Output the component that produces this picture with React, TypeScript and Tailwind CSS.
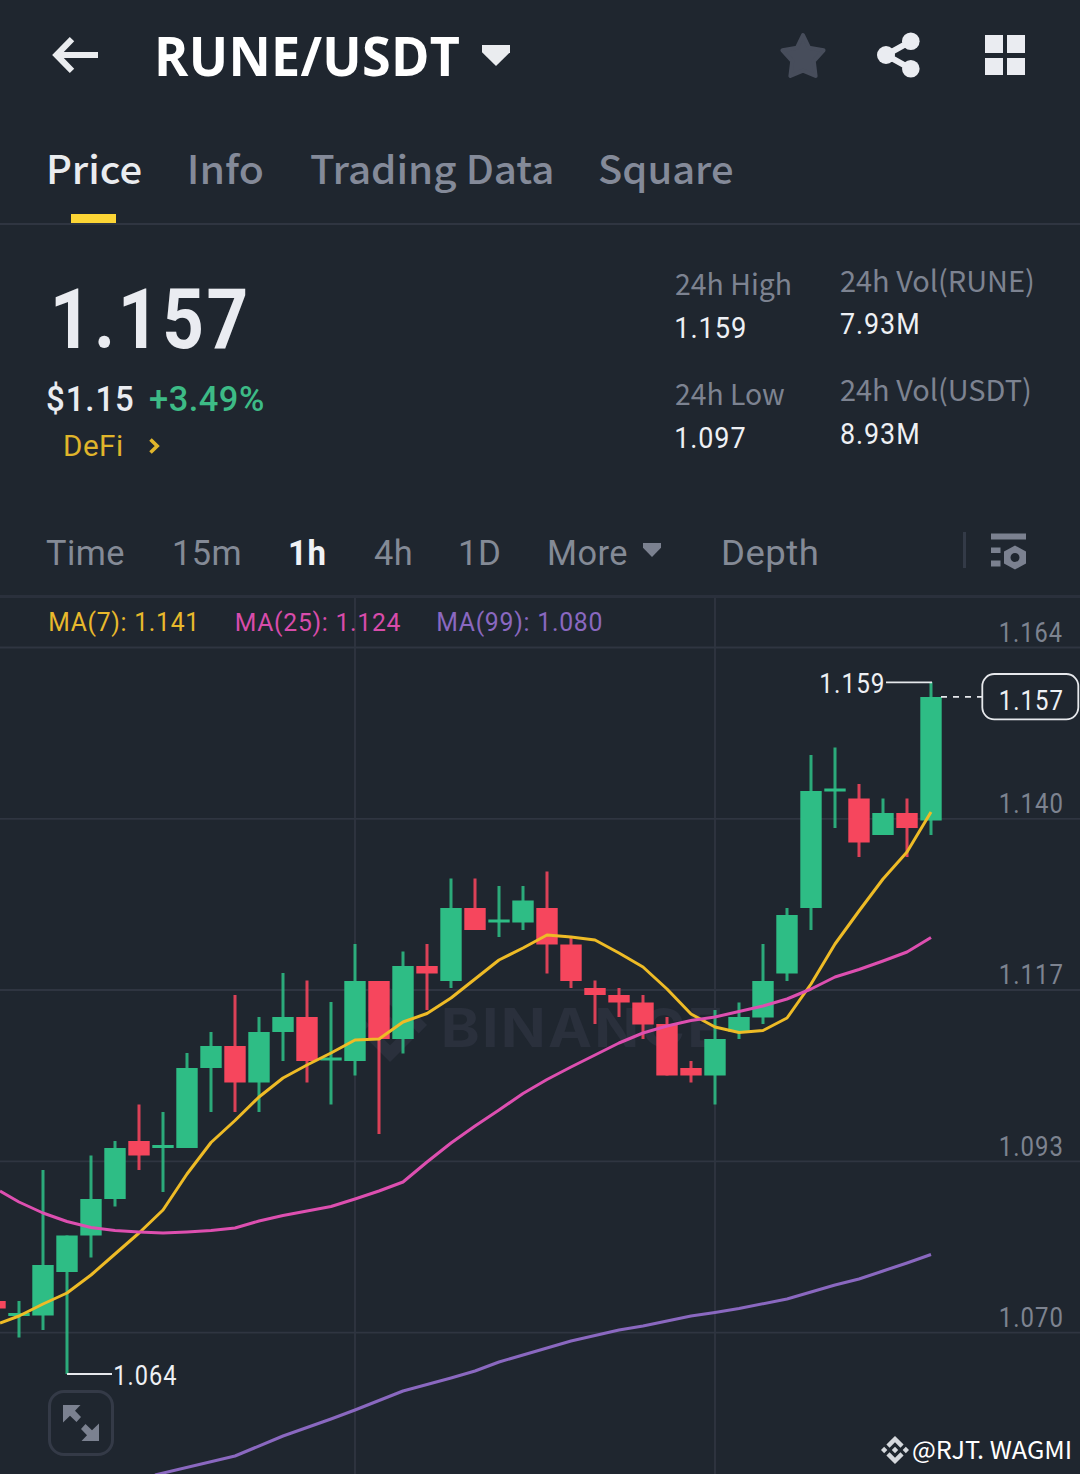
import { useLayoutEffect, useRef, useState } from "react";
import type { ReactNode } from "react";

const SANS = "font-['Noto_Sans_CJK_SC','Open_Sans',sans-serif]";
const DIN = "font-['Roboto','Inter',sans-serif]";

/* Measures the inked extent of a text so it can be set to an exact width. */
function measureInk(el: Element, text: string) {
  const cs = getComputedStyle(el);
  const ctx = document.createElement("canvas").getContext("2d")!;
  ctx.font = `${cs.fontWeight} ${cs.fontSize} ${cs.fontFamily}`;
  (ctx as unknown as { letterSpacing: string }).letterSpacing =
    cs.letterSpacing === "normal" ? "0px" : cs.letterSpacing;
  const m = ctx.measureText(text);
  return { left: m.actualBoundingBoxLeft, width: m.actualBoundingBoxLeft + m.actualBoundingBoxRight };
}

function Fit({ text, w, className }: { text: string; w: number; className: string }) {
  const ref = useRef<HTMLSpanElement>(null);
  const [t, setT] = useState("none");
  useLayoutEffect(() => {
    const ink = measureInk(ref.current!, text);
    const s = w / ink.width;
    setT(`translateX(${ink.left * s}px) scaleX(${s})`);
  }, [text, w]);
  return (
    <span className={`block shrink-0 whitespace-nowrap ${className}`} style={{ width: w }}>
      <span ref={ref} className="inline-block origin-left" style={{ transform: t }}>
        {text}
      </span>
    </span>
  );
}

function ChartText({ text, x, y, w, className }: { text: string; x: number; y: number; w: number; className: string }) {
  const ref = useRef<SVGTextElement>(null);
  const [t, setT] = useState(`translate(${x} ${y})`);
  useLayoutEffect(() => {
    const ink = measureInk(ref.current!, text);
    const s = w / ink.width;
    setT(`translate(${x + ink.left * s} ${y}) scale(${s} 1)`);
  }, [text, x, y, w]);
  return (
    <text ref={ref} transform={t} className={className}>
      {text}
    </text>
  );
}

function Caret({ className }: { className: string }) {
  return (
    <svg viewBox="0 0 28 22" preserveAspectRatio="none" className={className} fill="currentColor">
      <path d="M0 0H28V7.5L14 22L0 7.5Z" />
    </svg>
  );
}

function BinanceMark() {
  return (
    <>
      <path d="M38.7 53.2 63.3 28.6 87.9 53.2 102.2 38.9 63.3 0 24.4 38.9Z" />
      <path d="M0 63.3 14.3 49 28.6 63.3 14.3 77.6Z" />
      <path d="M38.7 73.4 63.3 98 87.9 73.4 102.2 87.7 63.3 126.6 24.4 87.7Z" />
      <path d="M98 63.3 112.3 49 126.6 63.3 112.3 77.6Z" />
      <path d="M77.8 63.3 63.3 48.8 48.8 63.3 63.3 77.8Z" />
    </>
  );
}

function Header() {
  return (
    <header className="flex h-[110px] items-center pl-[52px] pr-[55px]">
      <svg viewBox="0 0 46 36" className="h-[36px] w-[46px] shrink-0" fill="none" stroke="#eaecef" strokeWidth="6.2">
        <path d="M46 18H5M20 2.2L4.5 18L20 33.8" />
      </svg>
      <div className="ml-[60px] flex items-center pt-[2px]">
        <Fit
          text="RUNE/USDT"
          w={301}
          className="font-['Open_Sans',sans-serif] text-[53.5px] leading-[60px] font-bold tracking-[0.3px] text-white"
        />
      </div>
      <Caret className="ml-[23px] h-[21px] w-[28px] text-[#eaecef]" />
      <svg viewBox="0 0 46 47" className="ml-auto h-[47px] w-[46px]" fill="#474d5b" stroke="#474d5b" strokeWidth="4" strokeLinejoin="round">
        <path d="M23 3L29 15.7L43.5 18.3L33.8 29.2L35.6 44L23 38.6L10.4 44L12.2 29.2L2.5 18.3L17 15.7Z" />
      </svg>
      <svg viewBox="0 0 43 46" className="ml-[51px] h-[46px] w-[43px]" fill="#eaecf1" stroke="#eaecf1">
        <path d="M34 9.2L9 23L34 36.8" fill="none" strokeWidth="6" />
        <circle cx="33.8" cy="9.2" r="8.8" stroke="none" />
        <circle cx="9" cy="23" r="9" stroke="none" />
        <circle cx="33.8" cy="36.8" r="8.8" stroke="none" />
      </svg>
      <div className="ml-[65px] grid h-[40px] w-[40px] grid-cols-2 gap-x-[4px] gap-y-[5px]">
        <span className="bg-[#eaecf1]" />
        <span className="bg-[#eaecf1]" />
        <span className="bg-[#eaecf1]" />
        <span className="bg-[#eaecf1]" />
      </div>
    </header>
  );
}

function Tabs() {
  const tabs = [
    { label: "Price", w: 92, pad: "pl-0", active: true },
    { label: "Info", w: 73, pad: "pl-[2px]", active: false },
    { label: "Trading Data", w: 241, pad: "pl-0", active: false },
    { label: "Square", w: 133.5, pad: "pl-0", active: false },
  ];
  return (
    <nav className="flex h-[115px] gap-[47.4px] border-b-2 border-[#2f3541] pt-[37px] pl-[49px]">
      {tabs.map((t) => (
        <div key={t.label} className={`flex flex-col ${t.pad}`}>
          <Fit
            text={t.label}
            w={t.w}
            className={`${SANS} text-[39px] leading-[40px] font-medium ${t.active ? "text-[#eaecef]" : "text-[#848a99]"}`}
          />
          {t.active && <span className="mt-[27px] ml-[22px] h-[9px] w-[45px] bg-[#fcd535]" />}
        </div>
      ))}
    </nav>
  );
}

function Stat({ label, lw, value, vw, className }: { label: string; lw: number; value: string; vw: number; className: string }) {
  return (
    <div className={`flex flex-col justify-between ${className}`}>
      <Fit text={label} w={lw} className={`${SANS} text-[29px] leading-[36px] text-[#7d8391]`} />
      <Fit text={value} w={vw} className={`${DIN} text-[29.5px] leading-[36px] tracking-[1px] text-[#eef0f4]`} />
    </div>
  );
}

function Summary() {
  return (
    <section className="flex h-[285px] justify-between pr-[47px] pl-[47px]">
      <div className="flex flex-col pt-[53px]">
        <div className="pl-[8px]">
          <Fit text="1.157" w={191} className={`${DIN} text-[83px] leading-[84px] font-bold tracking-[3px] text-[#eaecf1]`} />
        </div>
        <div className="mt-[18px] flex gap-[17px]">
          <Fit text="$1.15" w={86} className={`${DIN} text-[35px] leading-[40px] font-medium tracking-[1px] text-[#eaecf1]`} />
          <Fit text="+3.49%" w={113.5} className={`${DIN} text-[35px] leading-[40px] font-medium tracking-[0.5px] text-[#3dbb86]`} />
        </div>
        <div className="mt-[8px] flex items-center pl-[18px]">
          <Fit text="DeFi" w={57} className={`${DIN} text-[29.5px] leading-[36px] tracking-[0.5px] text-[#e0b52b]`} />
          <svg viewBox="0 0 11 16" className="mb-[1px] ml-[27px] h-[16px] w-[11px]" fill="none" stroke="#e0b52b" strokeWidth="3.6">
            <path d="M1.5 1.5L8.2 8L1.5 14.5" />
          </svg>
        </div>
      </div>
      <div className="flex gap-[49.5px]">
        <div className="flex w-[116px] flex-col gap-[28px] pt-[39px]">
          <Stat label="24h High" lw={114.5} value="1.159" vw={69} className="h-[82px] pl-[0.5px]" />
          <Stat label="24h Low" lw={108.5} value="1.097" vw={69} className="h-[82px] pl-[0.5px]" />
        </div>
        <div className="flex w-[192px] flex-col gap-[28px] pt-[36px]">
          <Stat label="24h Vol(RUNE)" lw={192} value="7.93M" vw={77} className="h-[81px]" />
          <Stat label="24h Vol(USDT)" lw={189} value="8.93M" vw={77} className="h-[82px]" />
        </div>
      </div>
    </section>
  );
}

function Intervals() {
  const items = [
    { label: "Time", w: 78 },
    { label: "15m", w: 66 },
    { label: "1h", w: 34.5, active: true },
    { label: "4h", w: 36.5 },
    { label: "1D", w: 39 },
    { label: "More", w: 78 },
  ];
  return (
    <div className="flex h-[88px] items-center border-b-[3px] border-[#2a303c] pr-[54px] pl-[46px]">
      <div className="flex gap-[49.8px] pt-[2px]">
        {items.map((i) => (
          <Fit
            key={i.label}
            text={i.label}
            w={i.w}
            className={`${DIN} text-[35px] leading-[42px] tracking-[0.5px] ${i.active ? "font-bold text-[#f0f2f6]" : "text-[#848a96]"}`}
          />
        ))}
      </div>
      <Caret className="mb-[5px] ml-[16px] h-[14px] w-[18px] text-[#7b8190]" />
      <div className="ml-[62px] pt-[2px]">
        <Fit text="Depth" w={93.5} className={`${DIN} text-[35px] leading-[42px] tracking-[0.5px] text-[#848a96]`} />
      </div>
      <span className="mb-[5px] ml-auto h-[36px] w-[3px] bg-[#333a47]" />
      <svg viewBox="0 0 35 37" className="mb-[3px] ml-[25px] h-[37px] w-[35px]" fill="#7b8190">
        <path d="M0 0.5H35V6.5H0ZM0 14.5H9.5V20H0ZM0 27.5H9.5V33.5H0Z" />
        <path fillRule="evenodd" d="M24 12.5L35 18.5V30.5L24 36.5L13 30.5V18.5ZM24 20A4.5 4.5 0 1 0 24 29A4.5 4.5 0 1 0 24 20Z" />
      </svg>
    </div>
  );
}

/* [x centre, wick top, wick bottom, body top, body bottom, rising] */
const CANDLES: [number, number, number, number, number, 0 | 1][] = [
  [-5, 1301, 1308, 1301, 1308.5, 0],
  [19, 1301, 1337.5, 1313, 1316, 1],
  [43, 1170, 1330, 1265, 1315.5, 1],
  [67, 1235.5, 1374, 1235.5, 1272, 1],
  [91, 1155.5, 1257.5, 1199, 1235.5, 1],
  [115, 1141, 1206.5, 1148, 1199, 1],
  [139, 1104.5, 1170, 1141, 1155.5, 0],
  [163, 1112, 1192, 1145, 1148, 1],
  [187, 1053, 1148, 1068, 1148, 1],
  [211, 1032, 1112, 1046, 1068, 1],
  [235, 995, 1112, 1046, 1082.5, 0],
  [259, 1017, 1112, 1032, 1082.5, 1],
  [283, 973, 1061, 1017, 1032, 1],
  [307, 980.5, 1082.5, 1017, 1061, 0],
  [331, 1002, 1104.5, 1057.5, 1060.5, 1],
  [355, 944, 1075.5, 981, 1061, 1],
  [379, 981, 1134, 981, 1039, 0],
  [403, 951.5, 1053.5, 966, 1039, 1],
  [427, 944, 1010, 966, 973.5, 0],
  [451, 878.5, 988, 908, 981, 1],
  [475, 878.5, 930, 908, 930, 0],
  [499, 886, 937, 919.5, 922.5, 1],
  [523, 886, 930, 900.5, 922.5, 1],
  [547, 871.5, 973.5, 908, 944.5, 0],
  [571, 937, 988, 944.5, 981, 0],
  [595, 980.5, 1024, 988, 995, 0],
  [619, 988, 1017, 995, 1002.5, 0],
  [643, 995, 1039, 1002.5, 1024.5, 0],
  [667, 1017, 1075.5, 1024, 1075.5, 0],
  [691, 1061, 1082.5, 1068, 1075.5, 0],
  [715, 1010, 1104.5, 1039, 1075.5, 1],
  [739, 1002.5, 1039, 1017, 1032, 1],
  [763, 944, 1024, 981, 1017.5, 1],
  [787, 908, 981, 915, 973.5, 1],
  [811, 755, 930, 791, 908, 1],
  [835, 747.5, 828, 788.5, 791.5, 1],
  [859, 784, 857, 798.5, 842.5, 0],
  [883, 798.5, 835, 813, 835, 1],
  [907, 798.5, 857, 813, 828, 0],
  [931, 682, 835, 697, 820.5, 1],
];

const MA7 =
  "0,1323 19,1316 43,1304 67,1293 91,1275 115,1254 139,1233 163,1210 187,1174 211,1142.5 235,1120.5 259,1097 283,1078 307,1065 331,1053 355,1040 379,1039 403,1022 427,1013.5 451,998 475,979 499,960 523,948 547,935 571,937 595,940 619,953 643,967 667,989 691,1014 715,1027 739,1032.5 763,1030.5 787,1018 811,984 835,944 859,911 883,879 907,852 931,812";
const MA25 =
  "0,1191 19,1202 43,1213 67,1221.5 91,1227.5 115,1230.5 139,1232 163,1233 187,1232 211,1230.5 235,1228 259,1221 283,1215.5 307,1211 331,1206.5 355,1199 379,1191 403,1182 427,1162 451,1143 475,1126 499,1110 523,1093.5 547,1079.5 571,1067 595,1055 619,1043 643,1033 667,1026 691,1020.5 715,1017 739,1011.5 763,1006 787,999 811,989 835,977 859,969.5 883,961 907,952 931,937.5";
const MA99 =
  "155,1475 235,1456 283,1436 331,1419 355,1410 403,1391 451,1378 475,1371 499,1362 547,1348 571,1341 619,1330 643,1326 691,1316 715,1312.5 739,1308.5 787,1299 835,1285 859,1279 883,1271 907,1263 931,1254.5";

const AXIS = [
  { v: "1.164", y: 647.5 },
  { v: "1.140", y: 818.8 },
  { v: "1.117", y: 990 },
  { v: "1.093", y: 1161.3 },
  { v: "1.070", y: 1332.6 },
];

function Chart() {
  const num = `${DIN} text-[27px] tracking-[1.2px]`;
  const ma = `${DIN} text-[26.7px] tracking-[0.8px]`;
  return (
    <svg viewBox="0 598 1080 876" className="block h-[876px] w-[1080px]">
      <g stroke="#2f3541" strokeWidth="1.8">
        {AXIS.map((a) => (
          <path key={a.v} d={`M0 ${a.y}H1080`} />
        ))}
        <path d="M355 598V1474M715 598V1474" />
      </g>
      <g fill="#2a303c">
        <g transform="translate(353 988) scale(0.585)">
          <BinanceMark />
        </g>
        <ChartText text="BINANCE" x={444} y={1046.5} w={276} className="font-['Inter',sans-serif] text-[54px] font-bold tracking-[2px]" />
      </g>
      {CANDLES.map(([x, wt, wb, bt, bb, up]) => (
        <g key={x} fill={up ? "#2ebd85" : "#f6465d"}>
          <rect x={x - 1.5} y={wt} width="3" height={wb - wt} opacity="0.88" />
          <rect x={x - 10.7} y={bt} width="21.4" height={bb - bt} />
        </g>
      ))}
      <g fill="none" strokeWidth="3" strokeLinejoin="round">
        <polyline points={MA99} stroke="#8a68c0" />
        <polyline points={MA7} stroke="#eebb26" />
        <polyline points={MA25} stroke="#dd4fb0" />
      </g>
      <ChartText text="MA(7): 1.141" x={50} y={631} w={144.5} className={`${ma} fill-[#e8b92c]`} />
      <ChartText text="MA(25): 1.124" x={236.5} y={631} w={164} className={`${ma} fill-[#d84cab]`} />
      <ChartText text="MA(99): 1.080" x={438} y={631} w={163.5} className={`${ma} fill-[#8a68c0]`} />
      {AXIS.map((a) => (
        <ChartText key={a.v} text={a.v} x={1000.5} y={a.y - 5.7} w={61.5} className={`${num} fill-[#7d8390]`} />
      ))}
      <g fill="none" stroke="#e6e8ec" strokeWidth="2">
        <path d="M886 682.3H932M67 1374H112" strokeWidth="1.8" />
        <path d="M941 696.8H982" strokeWidth="1.8" strokeDasharray="6 6" />
        <rect x="982.3" y="674" width="96" height="45.3" rx="12" fill="#1f262f" strokeWidth="1.8" />
      </g>
      <ChartText text="1.159" x={821} y={693} w={62.5} className={`${num} fill-[#eef0f4]`} />
      <ChartText text="1.157" x={1000.5} y={709.7} w={61.5} className={`${num} fill-[#eef0f4]`} />
      <ChartText text="1.064" x={115} y={1385} w={61.5} className={`${num} fill-[#eef0f4]`} />
    </svg>
  );
}

function Overlay({ className, children }: { className: string; children: ReactNode }) {
  return <div className={`absolute ${className}`}>{children}</div>;
}

export default function App() {
  return (
    <main className="h-[1474px] w-[1080px] overflow-hidden bg-[#1f262f]">
      <Header />
      <Tabs />
      <Summary />
      <Intervals />
      <div className="relative">
        <Chart />
        <Overlay className="bottom-[18px] left-[48px]">
          <button className="flex h-[66px] w-[66px] items-center justify-center rounded-[16px] border-[3px] border-[#343a47]">
            <svg viewBox="0 0 36 36" className="h-[36px] w-[36px]" fill="#7b8190">
              <path d="M0 0H17.5L12 5.7L18 12L13.5 17L7 10.7L0 17.5Z" />
              <path d="M36 36H18.5L24 30.3L18 24L22.5 19L29 25.3L36 18.5Z" />
            </svg>
          </button>
        </Overlay>
        <Overlay className="right-[10px] bottom-[5px] flex items-center gap-[4px]">
          <svg viewBox="0 0 126.6 126.6" className="h-[28px] w-[28px]" fill="#d5d8dd">
            <BinanceMark />
          </svg>
          <div className="pb-[2px]">
            <Fit text="@RJT. WAGMI" w={157} className={`${SANS} text-[24.5px] leading-[36px] text-white`} />
          </div>
        </Overlay>
      </div>
    </main>
  );
}
